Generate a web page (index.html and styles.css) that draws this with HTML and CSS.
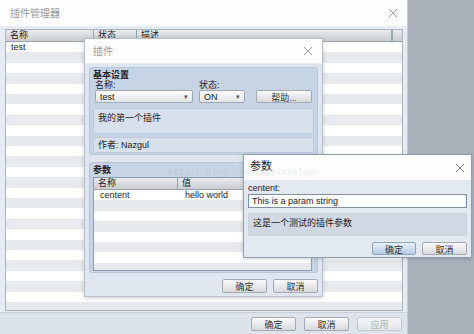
FILE: index.html
```html
<!DOCTYPE html>
<html lang="zh">
<head>
    <meta charset="UTF-8">
    <title>插件管理器</title>
    <link rel="stylesheet" href="styles.css">
</head>
<body>
<div class="desktop">

    <!-- main window -->
    <div class="window main">
        <div class="titlebar">
            <span class="title">插件管理器</span>
            <svg class="close" width="10" height="10" viewBox="0 0 10 10"><path d="M1 1L9 9M9 1L1 9" /></svg>
        </div>
        <div class="main-body">
            <div class="table">
                <div class="thead">
                    <div class="th col-name">名称</div>
                    <div class="th col-state">状态</div>
                    <div class="th col-desc">描述</div>
                    <div class="th col-corner"></div>
                </div>
                <div class="tbody">
                    <div class="row"><span class="col-name">test</span></div>
                </div>
            </div>
        </div>
        <div class="footer">
            <button class="btn">确定</button>
            <button class="btn">取消</button>
            <button class="btn" disabled>应用</button>
        </div>
    </div>

    <!-- plugin dialog -->
    <div class="window dialog plugin">
        <div class="titlebar">
            <span class="title">插件</span>
            <svg class="close" width="10" height="10" viewBox="0 0 10 10"><path d="M1 1L9 9M9 1L1 9" /></svg>
        </div>
        <div class="dialog-body">
            <div class="group basic">
                <div class="group-title">基本设置</div>
                <div class="form-grid">
                    <label class="lbl">名称:</label>
                    <label class="lbl">状态:</label>
                    <span></span>
                    <div class="combo">test<span class="arrow">▾</span></div>
                    <div class="combo">ON<span class="arrow">▾</span></div>
                    <button class="btn help">帮助...</button>
                </div>
                <div class="textbox desc">我的第一个插件</div>
                <div class="textbox author">作者: Nazgul</div>
            </div>
            <div class="group params">
                <div class="group-title">参数</div>
                <div class="table small">
                    <div class="thead">
                        <div class="th col-pname">名称</div>
                        <div class="th col-pval">值</div>
                    </div>
                    <div class="tbody">
                        <div class="row"><span class="col-pname">centent</span><span class="col-pval">hello world</span></div>
                    </div>
                </div>
            </div>
            <div class="actions">
                <button class="btn">确定</button>
                <button class="btn">取消</button>
            </div>
        </div>
    </div>

    <!-- param dialog -->
    <div class="window dialog param">
        <div class="titlebar">
            <span class="title">参数</span>
            <svg class="close" width="10" height="10" viewBox="0 0 10 10"><path d="M1 1L9 9M9 1L1 9" /></svg>
        </div>
        <div class="dialog-body">
            <div class="lbl">centent:</div>
            <div class="input">This is a param string</div>
            <div class="textbox note">这是一个测试的插件参数</div>
            <div class="actions">
                <button class="btn primary">确定</button>
                <button class="btn">取消</button>
            </div>
        </div>
    </div>

    <div class="watermark">http://blog.csdn.net/shalyun</div>
</div>
</body>
</html>
```

FILE: styles.css
```css
body {
    margin: 0;
    font-family: 'Liberation Sans', 'Noto Sans CJK SC', sans-serif;
    font-size: 9px;
    color: #222;
}
.desktop {
    position: relative;
    width: 474px;
    height: 334px;
    overflow: hidden;
    background: #aab1bb;
}
.window {
    display: flex;
    flex-direction: column;
    box-sizing: border-box;
}
.titlebar {
    display: flex;
    align-items: center;
    justify-content: space-between;
    background: #fdfdfe;
}
.title {
    color: #9a9a9a;
    font-size: 10px;
    line-height: 11px;
}
.close path {
    stroke: #a0a0a0;
    stroke-width: 1;
    fill: none;
}

/* main window */
.main {
    width: 408px;
    height: 334px;
    background: #e6ecf3;
    border-right: 1px solid #c3cad3;
}
.main > .titlebar {
    height: 26px;
    padding: 0 9px 0 10px;
}
.main-body {
    padding: 3px 4px 0 5px;
}
.table {
    border: 1px solid #a9b3bf;
    background: #fff;
}
.main .table {
    height: 282px;
    box-sizing: border-box;
}
.thead {
    display: flex;
    height: 11px;
    background: linear-gradient(#e9ebee, #c9cdd2);
    border-bottom: 1px solid #9aa3ae;
}
.th {
    line-height: 11px;
    padding-left: 4px;
    border-right: 1px solid #9aa3ae;
    box-sizing: border-box;
}
.col-name { width: 88px; }
.col-state { width: 43px; }
.col-desc { flex: 1; }
.th.col-corner {
    width: 10px;
    padding: 0;
    border-right: none;
    border-left: 1px solid #9aa3ae;
}
.tbody {
    height: calc(100% - 12px);
    background: repeating-linear-gradient(#fff 0, #fff 10.4px, #e6e9ed 10.4px, #e6e9ed 20.8px);
}
.row {
    display: flex;
    height: 10.4px;
    line-height: 10px;
}
.row .col-name { padding-left: 5px; }
.footer {
    flex: 1;
    display: flex;
    justify-content: flex-end;
    align-items: flex-start;
    gap: 8px;
    padding: 4px 5px 0 0;
    margin-top: 1px;
    background: #dce3eb;
    border-top: 1px solid #c9d1db;
}
.footer .btn { width: 45px; }

/* buttons and fields */
.btn {
    height: 14px;
    padding: 0;
    font: inherit;
    color: #333;
    background: linear-gradient(#fbfbfb, #d6d8dc);
    border: 1px solid #a3aab4;
    border-radius: 2px;
}
.btn:disabled {
    color: #b3b3b3;
    background: linear-gradient(#f4f5f7, #e2e5e9);
    border-color: #c2c8d0;
}
.btn.primary {
    background: linear-gradient(#e9f1fb, #b5cbe6);
    border-color: #8ea4c0;
}
.combo {
    position: relative;
    height: 13px;
    line-height: 12px;
    padding-left: 4px;
    box-sizing: border-box;
    background: linear-gradient(#fdfdfd, #e2e4e8);
    border: 1px solid #9fa7b2;
    border-radius: 2px;
}
.arrow {
    position: absolute;
    right: 4px;
    top: 0;
    font-size: 7px;
    color: #555;
}
.textbox {
    box-sizing: border-box;
    padding: 2px 4px;
    background: #d7e0eb;
    border: 1px solid #bccadb;
    border-radius: 2px;
}
.lbl {
    line-height: 9px;
}

/* dialogs */
.dialog {
    position: absolute;
    border: 1px solid #b7c0cb;
    box-shadow: 0 1px 4px rgba(60, 70, 90, 0.25);
}
.dialog-body {
    flex: 1;
    display: flex;
    flex-direction: column;
}
.actions {
    display: flex;
    justify-content: flex-end;
    gap: 6px;
}
.actions .btn { width: 45px; }

.plugin {
    left: 84px;
    top: 38px;
    width: 239px;
    height: 259px;
    background: #dfe6ef;
}
.plugin > .titlebar {
    height: 24px;
    padding: 0 9px 0 8px;
    border-bottom: 1px solid #e9edf2;
}
.plugin .dialog-body {
    padding: 3px 4px 0 4px;
}
.group {
    background: #c7d4e5;
    border: 1px solid #b7c5d8;
    border-radius: 3px;
    padding: 2px 3px;
}
.group-title {
    font-weight: bold;
    line-height: 11px;
}
.basic {
    height: 88px;
    box-sizing: border-box;
}
.form-grid {
    display: grid;
    grid-template-columns: 98px 46px 61px;
    column-gap: 6px;
    row-gap: 0;
    padding-left: 2px;
}
.form-grid .lbl { line-height: 9px; }
.help {
    justify-self: end;
    width: 56px;
    height: 13px;
}
.desc {
    height: 26px;
    margin-top: 5px;
}
.author {
    height: 16px;
    margin-top: 3px;
    line-height: 10px;
}
.params {
    height: 111px;
    box-sizing: border-box;
    margin-top: 7px;
}
.params .group-title { margin-bottom: 1px; }
.table.small {
    height: 94px;
    box-sizing: border-box;
    margin-right: 2px;
    border-color: #8d9aab;
}
.col-pname { width: 84px; }
.col-pval { flex: 1; }
.th.col-pval { border-right: none; }
.row .col-pname { padding-left: 6px; }
.row .col-pname, .row .col-pval { box-sizing: border-box; }
.row .col-pval { padding-left: 7px; }
.plugin .actions {
    margin-top: 6px;
}

.param {
    left: 243px;
    top: 154px;
    width: 229px;
    height: 104px;
    background: #e3e9f1;
    border-color: #8f9db0;
}
.param > .titlebar {
    height: 25px;
    padding: 0 6px 0 6px;
}
.param .title {
    color: #222;
    font-size: 11px;
    line-height: 11px;
    margin-bottom: 2px;
}
.param .close path { stroke: #777; }
.param .dialog-body {
    padding: 4px 4px 0 4px;
}
.input {
    height: 14px;
    line-height: 12px;
    margin-top: 1px;
    padding-left: 3px;
    box-sizing: border-box;
    background: #fff;
    border: 1px solid #7d8ea5;
}
.note {
    height: 23px;
    margin-top: 5px;
    background: #cfd8e3;
    border-color: #c6d1de;
}
.param .actions {
    margin-top: 6px;
}
.param .btn { height: 13px; }
.param .btn.primary { width: 44px; }

.watermark {
    position: absolute;
    left: 168px;
    top: 169px;
    font-family: 'Liberation Mono', monospace;
    font-size: 9px;
    line-height: 8px;
    color: rgba(120, 130, 145, 0.18);
    pointer-events: none;
}
```
